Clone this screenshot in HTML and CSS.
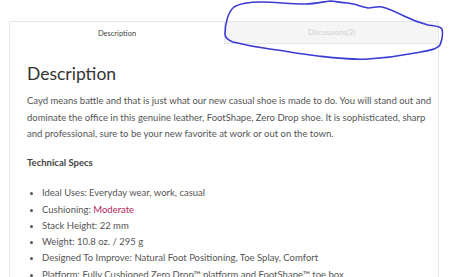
FILE: index.html
```html
<!DOCTYPE html>
<html lang="en">
<head>
    <meta charset="UTF-8">
    <meta name="viewport" content="width=device-width, initial-scale=1.0">
    <title>Cayd - Description</title>
    <link rel="stylesheet" href="styles.css">
</head>
<body>
    <div class="panel">
        <div class="tabs">
            <div class="tab active">Description</div>
            <div class="tab">Discussions(3)</div>
        </div>

        <div class="content">
            <h2 class="heading">Description</h2>
            <p class="intro">
                Cayd means battle and that is just what our new casual shoe is made to do. You will stand out and
                dominate the office in this genuine leather, FootShape, Zero Drop shoe. It is sophisticated, sharp
                and professional, sure to be your new favorite at work or out on the town.
            </p>

            <p class="specs-title">Technical Specs</p>

            <ul class="specs">
                <li>Ideal Uses: Everyday wear, work, casual</li>
                <li>Cushioning: <a href="#" class="link">Moderate</a></li>
                <li>Stack Height: 22 mm</li>
                <li>Weight: 10.8 oz. / 295 g</li>
                <li>Designed To Improve: Natural Foot Positioning, Toe Splay, Comfort</li>
                <li>Platform: Fully Cushioned Zero Drop™ platform and FootShape™ toe box</li>
            </ul>
        </div>
    </div>

    <!-- hand drawn marker around the discussions tab -->
    <svg class="scribble" width="474" height="70" viewBox="0 0 474 70">
        <path d="M233 42 C228 40 225 38 225 34 C225 24 228 12 234 7 C240 3 250 2 262 2 C275 2 290 4 305 4 C315 4 322 2 330 1 C336 1 340 3 348 3 C356 4 362 7 368 8 C374 8 376 6 382 7 C390 9 396 12 404 16 C412 20 420 23 428 25 C434 26 440 26 442 29 C443 33 442 40 440 45 C436 50 426 51 415 53 C400 56 385 58 368 59 C350 60 335 58 318 56 C300 54 285 51 270 49 C255 47 245 45 233 42 Z"
              fill="none" stroke="#3b3bd6" stroke-width="1.6" stroke-linejoin="round"/>
    </svg>
</body>
</html>
```

FILE: styles.css
```css
body {
    margin: 0;
    background: #fff;
    font-family: Lato, "Open Sans", sans-serif;
    color: #555;
}

.panel {
    margin: 21px 0 0 9px;
    width: 428px;
    height: 256px;
    border: 1px solid #e6e6e6;
    border-bottom: none;
    overflow: hidden;
}

.tabs {
    display: grid;
    grid-template-columns: 1fr 1fr;
    height: 22px;
}

.tab {
    display: flex;
    align-items: center;
    justify-content: center;
    font-size: 7.5px;
    color: #d0d0d0;
    background: #f5f5f5;
    border-left: 1px solid #e6e6e6;
    border-bottom: 1px solid #e6e6e6;
}

.tab.active {
    background: #fff;
    color: #444;
    border: none;
}

.content {
    padding: 0 6px 0 17px;
}

.heading {
    margin: 18px 0 7px;
    font-size: 17.5px;
    font-weight: normal;
    color: #333;
    line-height: 24px;
}

.intro {
    margin: 0;
    font-size: 9.5px;
    line-height: 16.6px;
}

.specs-title {
    margin: 12px 0 0;
    font-size: 9.5px;
    font-weight: bold;
    color: #444;
    line-height: 16.5px;
}

.specs {
    margin: 14px 0 0;
    padding-left: 15px;
    font-size: 9.5px;
    line-height: 16.3px;
}

.specs li::marker {
    font-size: 8px;
}

.link {
    color: #b3245e;
    text-decoration: none;
}

.scribble {
    position: absolute;
    top: 0;
    left: 0;
}
```
